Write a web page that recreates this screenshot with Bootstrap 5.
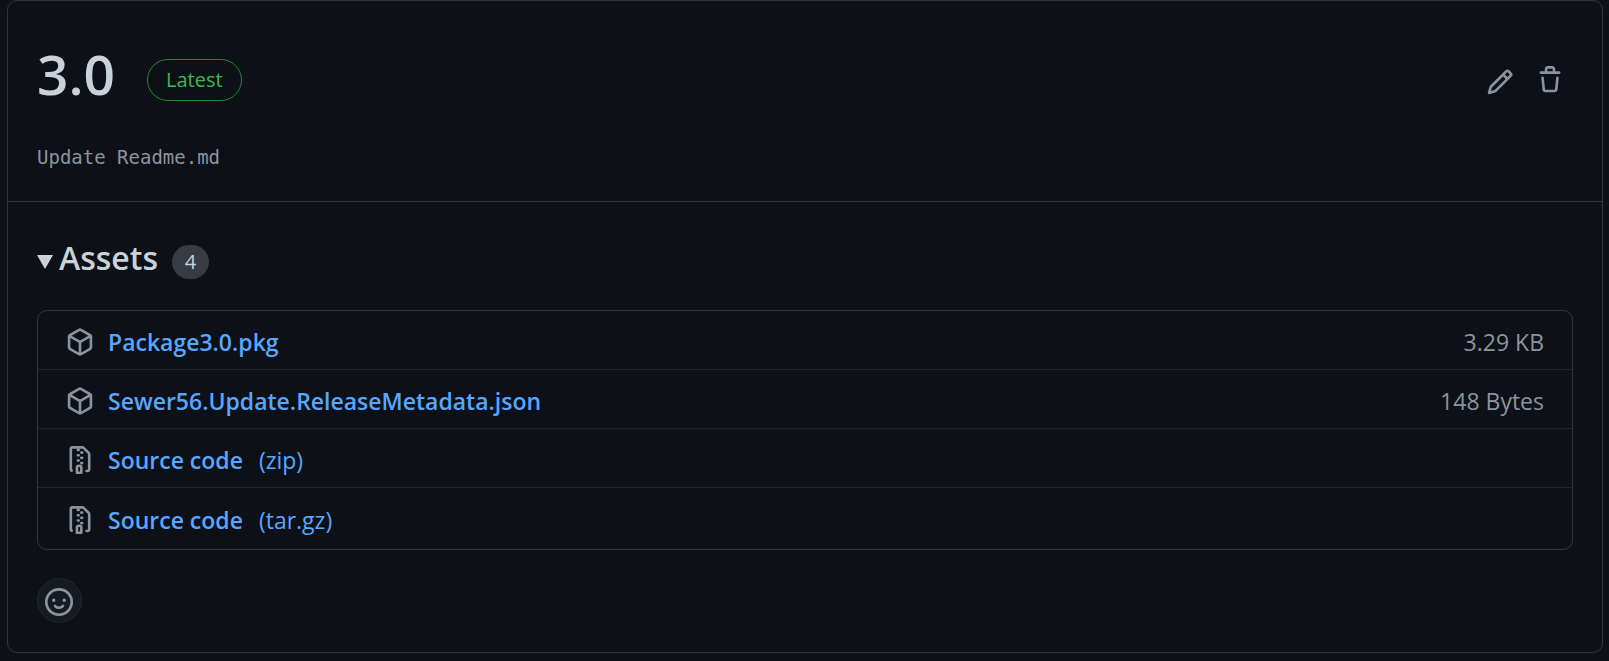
<!DOCTYPE html>
<html lang="en" data-bs-theme="dark">
<head>
<meta charset="utf-8">
<meta name="viewport" content="width=device-width, initial-scale=1">
<title>Release 3.0</title>
<link href="https://cdn.jsdelivr.net/npm/bootstrap@5.3.0/dist/css/bootstrap.min.css" rel="stylesheet">
<style>
  body { background: #0d1117; color: #c9d1d9; font-family: "Open Sans", "Noto Sans", sans-serif; font-size: 23px; line-height: 36px; }
  .release { margin: 0 6px 0 7px; border: 1px solid #30363d; border-radius: 10px; }
  .release-head { padding: 37px 29px 29px; border-bottom: 1px solid #30363d; }
  .release-title { font-size: 55px; line-height: 72px; font-weight: 600; color: inherit; }
  .latest { height: 42px; margin: 12px 0 0 32px; padding: 0 18px; border: 1px solid #238636; border-radius: 21px; color: #3fb950; font-size: 20px; font-weight: 500; text-decoration: none; }
  .icon { width: 28px; height: 28px; fill: #8b949e; flex: none; display: block; }
  .tools { gap: 22px; padding: 12px 9px 0 0; }
  .icon-button { border: 0; padding: 0; background: none; }
  .note { margin-top: 32px; font: 19px/30px "DejaVu Sans Mono", monospace; color: #8b949e; }
  .release-body { padding: 28px 29px 29px; }
  .assets-toggle { list-style: none; display: flex; align-items: center; margin-bottom: 24px; height: 56px; }
  .assets-toggle::-webkit-details-marker { display: none; }
  .triangle { width: 16px; height: 14px; fill: #c9d1d9; margin: 8px 6px 0 0; }
  .assets-title { font-size: 32px; line-height: 48px; font-weight: 600; }
  .counter { min-width: 37px; height: 34px; margin: 8px 0 0 14px; border-radius: 17px; background: #373c44; font-size: 20px; line-height: 34px; font-weight: 500; text-align: center; }
  .assets { border: 1px solid #30363d; border-radius: 10px; }
  .asset { min-height: 59px; padding: 4px 28px 0; border-bottom: 1px solid #21262d; }
  .asset:last-child { border-bottom: 0; padding-bottom: 2px; min-height: 61px; }
  .asset a { color: #58a6ff; margin-left: 14px; text-decoration: none; }
  .asset a:hover { text-decoration: underline; }
  .asset-name { font-weight: 600; }
  .kind { margin-left: 16px; }
  .size { color: #8b949e; }
  .react { width: 45px; height: 45px; margin-top: 28px; border: 1px solid #21262d; border-radius: 50%; background: #161b22; padding: 2px 1px 0 0; }
</style>
</head>
<body>
<svg class="d-none" aria-hidden="true">
  <symbol id="package" viewBox="0 0 16 16"><path fill-rule="evenodd" d="M8.878.392a1.75 1.75 0 00-1.756 0l-5.25 3.045A1.75 1.75 0 001 4.951v6.098c0 .624.332 1.2.872 1.514l5.25 3.045a1.75 1.75 0 001.756 0l5.25-3.045c.54-.313.872-.89.872-1.514V4.951c0-.624-.332-1.2-.872-1.514L8.878.392zM7.875 1.69a.25.25 0 01.25 0l4.63 2.685L8 7.133 3.245 4.375l4.63-2.685zM2.5 5.677v5.372c0 .09.047.171.125.216l4.625 2.683V8.432L2.5 5.677zm6.25 8.271l4.625-2.683a.25.25 0 00.125-.216V5.677L8.75 8.432v5.516z"/></symbol>
  <symbol id="zip" viewBox="0 0 16 16"><path fill-rule="evenodd" d="M3.5 1.75a.25.25 0 01.25-.25h3a.75.75 0 000 1.5h.5a.75.75 0 000-1.5h2.086a.25.25 0 01.177.073l2.914 2.914a.25.25 0 01.073.177v8.586a.25.25 0 01-.25.25h-.5a.75.75 0 000 1.5h.5A1.75 1.75 0 0014 13.25V4.664c0-.464-.184-.909-.513-1.237L10.573.513A1.75 1.75 0 009.336 0H3.75A1.75 1.75 0 002 1.75v11.5c0 .649.353 1.214.874 1.515a.75.75 0 10.752-1.298.25.25 0 01-.126-.217V1.75zM8.75 3a.75.75 0 000 1.5h.5a.75.75 0 000-1.5h-.5zM6 5.25a.75.75 0 01.75-.75h.5a.75.75 0 010 1.5h-.5A.75.75 0 016 5.25zm2 1.5A.75.75 0 018.75 6h.5a.75.75 0 010 1.5h-.5A.75.75 0 018 6.75zm-1.25.75a.75.75 0 000 1.5h.5a.75.75 0 000-1.5h-.5zM8 9.75A.75.75 0 018.75 9h.5a.75.75 0 010 1.5h-.5A.75.75 0 018 9.75zm-.75.75a1.75 1.75 0 00-1.75 1.75v3c0 .414.336.75.75.75h2.5a.75.75 0 00.75-.75v-3a1.75 1.75 0 00-1.75-1.75h-.5zM7 12.25a.25.25 0 01.25-.25h.5a.25.25 0 01.25.25v2.25H7v-2.25z"/></symbol>
</svg>
<main class="release">
  <header class="release-head">
    <div class="d-flex align-items-center">
      <h1 class="release-title m-0">3.0</h1>
      <a class="latest d-flex align-items-center" id="latest" href="#latest">Latest</a>
      <div class="tools d-flex ms-auto">
        <button class="icon-button" type="button" aria-label="Edit release"><svg class="icon mt-1" viewBox="0 0 16 16"><path fill-rule="evenodd" d="M11.013 1.427a1.75 1.75 0 012.474 0l1.086 1.086a1.75 1.75 0 010 2.474l-8.61 8.61c-.21.21-.47.364-.756.445l-3.251.93a.75.75 0 01-.927-.928l.929-3.25a1.75 1.75 0 01.445-.758l8.61-8.61zm1.414 1.06a.25.25 0 00-.354 0L10.811 3.75l1.439 1.44 1.263-1.263a.25.25 0 000-.354l-1.086-1.086zM11.189 6.25L9.75 4.81l-6.286 6.287a.25.25 0 00-.064.108l-.558 1.953 1.953-.558a.249.249 0 00.108-.064l6.286-6.286z"/></svg></button>
        <button class="icon-button" type="button" aria-label="Delete release"><svg class="icon" viewBox="0 0 16 16"><path fill-rule="evenodd" d="M6.5 1.75a.25.25 0 01.25-.25h2.5a.25.25 0 01.25.25V3h-3V1.75zm4.5 0V3h2.25a.75.75 0 010 1.5H2.75a.75.75 0 010-1.5H5V1.75C5 .784 5.784 0 6.75 0h2.5C10.216 0 11 .784 11 1.75zM4.496 6.675a.75.75 0 10-1.492.15l.66 6.6A1.75 1.75 0 005.405 15h5.19c.9 0 1.652-.681 1.741-1.576l.66-6.6a.75.75 0 00-1.492-.149l-.66 6.6a.25.25 0 01-.249.225h-5.19a.25.25 0 01-.249-.225l-.66-6.6z"/></svg></button>
      </div>
    </div>
    <p class="note mb-0">Update Readme.md</p>
  </header>
  <div class="release-body">
    <details open>
      <summary class="assets-toggle">
        <svg class="triangle" viewBox="0 0 16 14" aria-hidden="true"><path d="M0 0h16L8 14z"/></svg>
        <span class="assets-title">Assets</span>
        <span class="counter">4</span>
      </summary>
      <ul class="assets list-unstyled m-0">
        <li class="asset d-flex align-items-center"><svg class="icon"><use href="#package"/></svg><a href="#package-file"><span class="asset-name">Package3.0.pkg</span></a><span class="size ms-auto">3.29 KB</span></li>
        <li class="asset d-flex align-items-center"><svg class="icon"><use href="#package"/></svg><a href="#metadata"><span class="asset-name">Sewer56.Update.ReleaseMetadata.json</span></a><span class="size ms-auto">148 Bytes</span></li>
        <li class="asset d-flex align-items-center"><svg class="icon"><use href="#zip"/></svg><a href="#source-zip"><span class="asset-name">Source code</span><span class="kind">(zip)</span></a></li>
        <li class="asset d-flex align-items-center"><svg class="icon"><use href="#zip"/></svg><a href="#source-tar"><span class="asset-name">Source code</span><span class="kind">(tar.gz)</span></a></li>
      </ul>
    </details>
    <button class="react d-flex align-items-center justify-content-center" type="button" aria-label="Add a reaction"><svg class="icon" viewBox="0 0 16 16"><path fill-rule="evenodd" d="M1.5 8a6.5 6.5 0 1113 0 6.5 6.5 0 01-13 0zM8 0a8 8 0 100 16A8 8 0 008 0zM5 8a1 1 0 100-2 1 1 0 000 2zm7-1a1 1 0 11-2 0 1 1 0 012 0zM5.32 9.636a.75.75 0 011.038.175l.007.009c.103.118.22.222.35.31.264.178.683.37 1.285.37.602 0 1.02-.192 1.285-.371.13-.088.247-.192.35-.31l.007-.008a.75.75 0 111.222.87l-.614-.431c.614.43.614.431.613.431v.001l-.001.002-.002.003-.005.007-.014.019a1.984 1.984 0 01-.184.213c-.16.166-.338.316-.53.445-.63.418-1.37.638-2.127.629-.946 0-1.652-.308-2.126-.63a3.331 3.331 0 01-.715-.657l-.014-.02-.005-.006-.002-.003v-.002h-.001l.613-.432-.614.43a.75.75 0 01.183-1.044h.001z"/></svg></button>
  </div>
</main>
<script src="https://cdn.jsdelivr.net/npm/bootstrap@5.3.0/dist/js/bootstrap.bundle.min.js"></script>
</body>
</html>
